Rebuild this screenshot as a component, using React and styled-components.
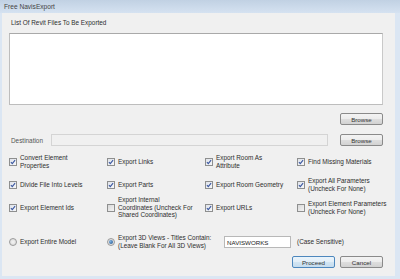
import React from "react";
import styled, { createGlobalStyle } from "styled-components";

const Global = createGlobalStyle`
  html, body { margin: 0; padding: 0; }
  body { width: 400px; height: 279px; overflow: hidden; background: #dce7f4; }
  * { box-sizing: border-box; }
`;

const Frame = styled.div`
  width: 400px;
  height: 279px;
  display: flex;
  flex-direction: column;
  background: #dbe6f3;
  font-family: "Liberation Sans", Arial, sans-serif;
  font-size: 6.4px;
  color: #2e2e2e;
`;

const TitleBar = styled.div`
  height: 13px;
  display: flex;
  align-items: center;
  padding-left: 4px;
  background: linear-gradient(#c1d1e3, #d5e2f1);
  color: #444;
  font-size: 6.6px;
`;

const Client = styled.div`
  margin: 0 5px 3px 2px;
  flex: 1;
  background: #f0f0f0;
  display: flex;
  flex-direction: column;
  padding: 6px 12px 8px 7px;
`;

const Caption = styled.div`
  line-height: 8px;
  height: 8px;
  padding-left: ${(p) => p.$indent || 0}px;
  white-space: nowrap;
`;

const ListBox = styled.div`
  margin-top: 6px;
  height: 72px;
  background: #fff;
  border: 1px solid #bdbdbd;
  border-top-color: #a9a9a9;
  border-right-color: #c9c9c9;
`;

const Button = styled.div`
  width: 43px;
  height: 12px;
  display: flex;
  align-items: center;
  justify-content: center;
  border: 1px solid ${(p) => (p.$default ? "#4d87bd" : "#8a8a8a")};
  border-radius: 2px;
  background: ${(p) =>
    p.$default
      ? "linear-gradient(#eaf4fb 0%, #e2eef8 50%, #d2e5f3 51%, #c5dcee 100%)"
      : "linear-gradient(#f3f3f3 0%, #ececec 50%, #dedede 51%, #d2d2d2 100%)"};
  color: #333;
  font-size: 6.2px;
`;

const RightRow = styled.div`
  display: flex;
  justify-content: flex-end;
  gap: 5px;
  margin-top: ${(p) => p.$mt}px;
`;

const DestRow = styled.div`
  display: grid;
  grid-template-columns: 42px 1fr 43px;
  align-items: center;
  margin-top: 9px;
  height: 12px;
`;

const DestLabel = styled.div`
  padding-left: 2px;
  color: #555;
`;

const DestField = styled.div`
  height: 12px;
  margin-right: 12px;
  border: 1px solid #d4d4d4;
  background: #f0f0f0;
`;

const OptionGrid = styled.div`
  display: grid;
  grid-template-columns: 98px 98px 92px 1fr;
  grid-auto-rows: 23px;
  margin-top: 4px;
`;

const Option = styled.div`
  display: flex;
  align-items: center;
  gap: 3px;
`;

const OptionText = styled.div`
  line-height: 7.8px;
  white-space: nowrap;
`;

const Box = styled.div`
  flex: none;
  width: 8px;
  height: 8px;
  border: 1px solid #8e8f8f;
  background: ${(p) =>
    p.$on
      ? "linear-gradient(135deg, #dfe3ea, #f6f7f9)"
      : "linear-gradient(135deg, #d8d8d8, #f4f4f4)"};
  display: flex;
  align-items: center;
  justify-content: center;
`;

const Radio = styled.div`
  flex: none;
  width: 8px;
  height: 8px;
  border-radius: 50%;
  border: 1px solid #9a9a9a;
  background: radial-gradient(circle, #f4f4f4, #d6d6d6);
  display: flex;
  align-items: center;
  justify-content: center;
  &::after {
    content: "";
    display: ${(p) => (p.$on ? "block" : "none")};
    width: 4px;
    height: 4px;
    border-radius: 50%;
    background: radial-gradient(circle at 35% 35%, #7fb2e0, #1d4f8a);
  }
`;

const RadioRow = styled.div`
  display: grid;
  grid-template-columns: 98px 117px 73px 1fr;
  align-items: center;
  height: 24px;
  margin-top: 11px;
`;

const TextInput = styled.div`
  width: 67px;
  height: 12px;
  display: flex;
  align-items: center;
  padding-left: 2px;
  background: #fff;
  border: 1px solid #b8b8b8;
  color: #222;
  font-size: 6.2px;
`;

const Check = () => (
  <svg width="6" height="6" viewBox="0 0 6 6">
    <path d="M0.9 3.1 L2.3 4.6 L5.1 1.2" fill="none" stroke="#3a57a0" strokeWidth="1.1" />
  </svg>
);

const CheckOption = ({ on = true, children }) => (
  <Option>
    <Box $on={on}>{on && <Check />}</Box>
    <OptionText>{children}</OptionText>
  </Option>
);

const Br = () => <br />;

export default function App() {
  return (
    <>
      <Global />
      <Frame>
        <TitleBar>Free NavisExport</TitleBar>
        <Client>
          <Caption $indent={2}>List Of Revit Files To Be Exported</Caption>
          <ListBox />
          <RightRow $mt={8}>
            <Button>Browse</Button>
          </RightRow>
          <DestRow>
            <DestLabel>Destination</DestLabel>
            <DestField />
            <Button>Browse</Button>
          </DestRow>
          <OptionGrid>
            <CheckOption>Convert Element<Br />Properties</CheckOption>
            <CheckOption>Export Links</CheckOption>
            <CheckOption>Export Room As<Br />Attribute</CheckOption>
            <CheckOption>Find Missing Materials</CheckOption>
            <CheckOption>Divide File Into Levels</CheckOption>
            <CheckOption>Export Parts</CheckOption>
            <CheckOption>Export Room Geometry</CheckOption>
            <CheckOption>Export All Parameters<Br />(Uncheck For None)</CheckOption>
            <CheckOption>Export Element Ids</CheckOption>
            <CheckOption on={false}>
              Export Internal<Br />Coordinates (Uncheck For<Br />Shared Coordinates)
            </CheckOption>
            <CheckOption>Export URLs</CheckOption>
            <CheckOption on={false}>Export Element Parameters<Br />(Uncheck For None)</CheckOption>
          </OptionGrid>
          <RadioRow>
            <Option>
              <Radio />
              <OptionText>Export Entire Model</OptionText>
            </Option>
            <Option>
              <Radio $on />
              <OptionText>
                Export 3D Views - Titles Contain:<Br />(Leave Blank For All 3D Views)
              </OptionText>
            </Option>
            <TextInput>NAVISWORKS</TextInput>
            <OptionText>(Case Sensitive)</OptionText>
          </RadioRow>
          <RightRow $mt={2}>
            <Button $default>Proceed</Button>
            <Button>Cancel</Button>
          </RightRow>
        </Client>
      </Frame>
    </>
  );
}
